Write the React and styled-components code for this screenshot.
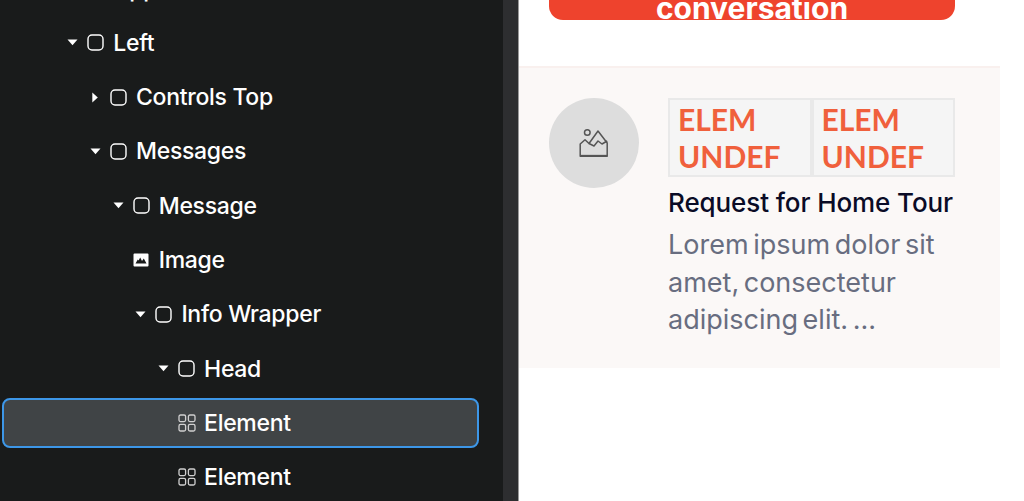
import styled, { createGlobalStyle } from 'styled-components';

const GlobalStyle = createGlobalStyle`
  html, body {
    margin: 0;
    padding: 0;
    height: 100%;
    overflow: hidden;
    background: #fff;
  }
`

const Page = styled.div`
  display: flex;
  height: 501px;
  width: 1024px;
  overflow: hidden;
  font-family: Inter, "Liberation Sans", sans-serif;
`

const Sidebar = styled.div`
  width: 503px;
  flex: none;
  background: #191b1b;
  padding: 0 24px 0 2px;
  box-sizing: border-box;
  overflow: hidden;
`

const Tree = styled.div`
  margin-top: -36.5px;
`

const Row = styled.div`
  display: flex;
  align-items: center;
  box-sizing: border-box;
  height: 50px;
  margin-bottom: 4.3px;
  padding-left: ${p => p.$level * 22.7 + 40.6}px;
  color: #fff;
  font-size: 23px;
  font-weight: 500;
  letter-spacing: -0.3px;
  border: 2px solid ${p => (p.$selected ? '#3d97e8' : 'transparent')};
  border-radius: 8px;
  background: ${p => (p.$selected ? '#404446' : 'transparent')};
  white-space: nowrap;
`

const Caret = styled.span`
  width: 18px;
  display: flex;
  flex: none;
`

const IconSlot = styled.span`
  width: 21px;
  height: 21px;
  margin-right: 7px;
  flex: none;
  display: flex;
  align-items: center;
  justify-content: center;
`

const Splitter = styled.div`
  width: 16px;
  flex: none;
  background: #2d2e30;
  border-right: 1px solid #9a9a9a;
  box-sizing: border-box;
`

const Canvas = styled.div`
  flex: 1;
  background: #fff;
`

const Cta = styled.div`
  box-sizing: border-box;
  margin: -20px 0 0 30px;
  width: 406px;
  height: 40px;
  background: #ee432d;
  border-radius: 0 0 14px 14px;
  color: #fff;
  font-size: 30px;
  font-weight: 700;
  line-height: 30px;
  text-align: center;
  padding-top: 13px;
  overflow: hidden;
`

const Card = styled.div`
  display: flex;
  box-sizing: border-box;
  margin-top: 46px;
  width: 481px;
  height: 302px;
  padding: 30px 45px 0 30px;
  background: #fbf8f7;
  border-top: 2px solid #f9f0ee;
`

const Avatar = styled.div`
  width: 90px;
  height: 90px;
  flex: none;
  border-radius: 50%;
  background: #dddddd;
  margin-right: 29px;
  display: flex;
  align-items: center;
  justify-content: center;
`

const Body = styled.div`
  flex: 1;
  min-width: 0;
`

const Head = styled.div`
  display: flex;
`

const Undefined = styled.div`
  flex: 1;
  box-sizing: border-box;
  height: 79px;
  padding: 1px 0 0 8px;
  background: #f5f5f5;
  border: 2px solid #e9e9e9;
  color: #f0603c;
  font-family: Lato, sans-serif;
  font-size: 30px;
  font-weight: 700;
  line-height: 37px;
`

const Title = styled.div`
  margin-top: 7px;
  color: #0a0b26;
  font-size: 26px;
  font-weight: 500;
  letter-spacing: -0.1px;
  line-height: 37px;
  white-space: nowrap;
`

const Text = styled.div`
  margin-top: 5px;
  color: #686d80;
  font-size: 27px;
  word-spacing: -3px;
  line-height: 37.5px;
`

const CaretDown = () => (
  <svg width="11" height="7" viewBox="0 0 11 7"><path d="M0.5 0.5h10L5.5 6.2z" fill="#fff" /></svg>
)

const CaretRight = () => (
  <svg width="9" height="11" viewBox="0 0 9 11"><path d="M2.3 0.5v10L7.8 5.5z" fill="#fff" /></svg>
)

const BoxIcon = () => (
  <svg width="17" height="17" viewBox="0 0 17 17">
    <rect x="1" y="1" width="15" height="15" rx="4" fill="none" stroke="#fff" strokeWidth="1.4" />
  </svg>
)

const ImageIcon = () => (
  <svg width="16" height="14" viewBox="0 0 16 14">
    <path fillRule="evenodd" fill="#fff" d="M1.5 0.5h13a1 1 0 0 1 1 1v11a1 1 0 0 1-1 1h-13a1 1 0 0 1-1-1v-11a1 1 0 0 1 1-1zM2.5 10.5h11L10.8 5.5 9 8 7.2 4.5 5.6 7.5 4.8 6.5z" />
  </svg>
)

const ElementIcon = () => (
  <svg width="18" height="18" viewBox="0 0 18 18" fill="none" stroke="#d0d0d0" strokeWidth="1.3">
    <rect x="1" y="1" width="6.6" height="6.6" rx="1.5" />
    <rect x="10.4" y="1" width="6.6" height="6.6" rx="1.5" />
    <rect x="1" y="10.4" width="6.6" height="6.6" rx="1.5" />
    <rect x="10.4" y="10.4" width="6.6" height="6.6" rx="1.5" />
  </svg>
)

const PictureIcon = () => (
  <svg width="30" height="30" viewBox="0 0 30 30" fill="none" stroke="#555" strokeWidth="1.5" strokeLinejoin="round">
    <circle cx="8.3" cy="4.5" r="2.8" />
    <path d="M1.2 28.2V16L6 11.8l4 3.7L19 3l9.2 12v13.2z" />
    <path d="M10 15.5l5 2.5 4-5 4 3 5.2-3" />
    <path d="M1.2 27.6h27" />
  </svg>
)

const icons = { box: BoxIcon, image: ImageIcon, element: ElementIcon }

const rows = [
  { label: 'App', level: 1, caret: 'down', icon: 'box' },
  { label: 'Left', level: 1, caret: 'down', icon: 'box' },
  { label: 'Controls Top', level: 2, caret: 'right', icon: 'box' },
  { label: 'Messages', level: 2, caret: 'down', icon: 'box' },
  { label: 'Message', level: 3, caret: 'down', icon: 'box' },
  { label: 'Image', level: 3, icon: 'image' },
  { label: 'Info Wrapper', level: 4, caret: 'down', icon: 'box' },
  { label: 'Head', level: 5, caret: 'down', icon: 'box' },
  { label: 'Element', level: 5, icon: 'element', selected: true },
  { label: 'Element', level: 5, icon: 'element' },
]

const App = () => {
  return (
    <Page>
      <GlobalStyle />
      <Sidebar>
        <Tree>
          {rows.map((row, i) => {
            const Icon = icons[row.icon]
            return (
              <Row key={i} $level={row.level} $selected={row.selected}>
                <Caret>
                  {row.caret === 'down' && <CaretDown />}
                  {row.caret === 'right' && <CaretRight />}
                </Caret>
                <IconSlot><Icon /></IconSlot>
                {row.label}
              </Row>
            )
          })}
        </Tree>
      </Sidebar>
      <Splitter />
      <Canvas>
        <Cta>conversation</Cta>
        <Card>
          <Avatar><PictureIcon /></Avatar>
          <Body>
            <Head>
              <Undefined>ELEM UNDEF</Undefined>
              <Undefined>ELEM UNDEF</Undefined>
            </Head>
            <Title>Request for Home Tour</Title>
            <Text>Lorem ipsum dolor sit amet, consectetur adipiscing elit. ...</Text>
          </Body>
        </Card>
      </Canvas>
    </Page>
  )
}

export default App
